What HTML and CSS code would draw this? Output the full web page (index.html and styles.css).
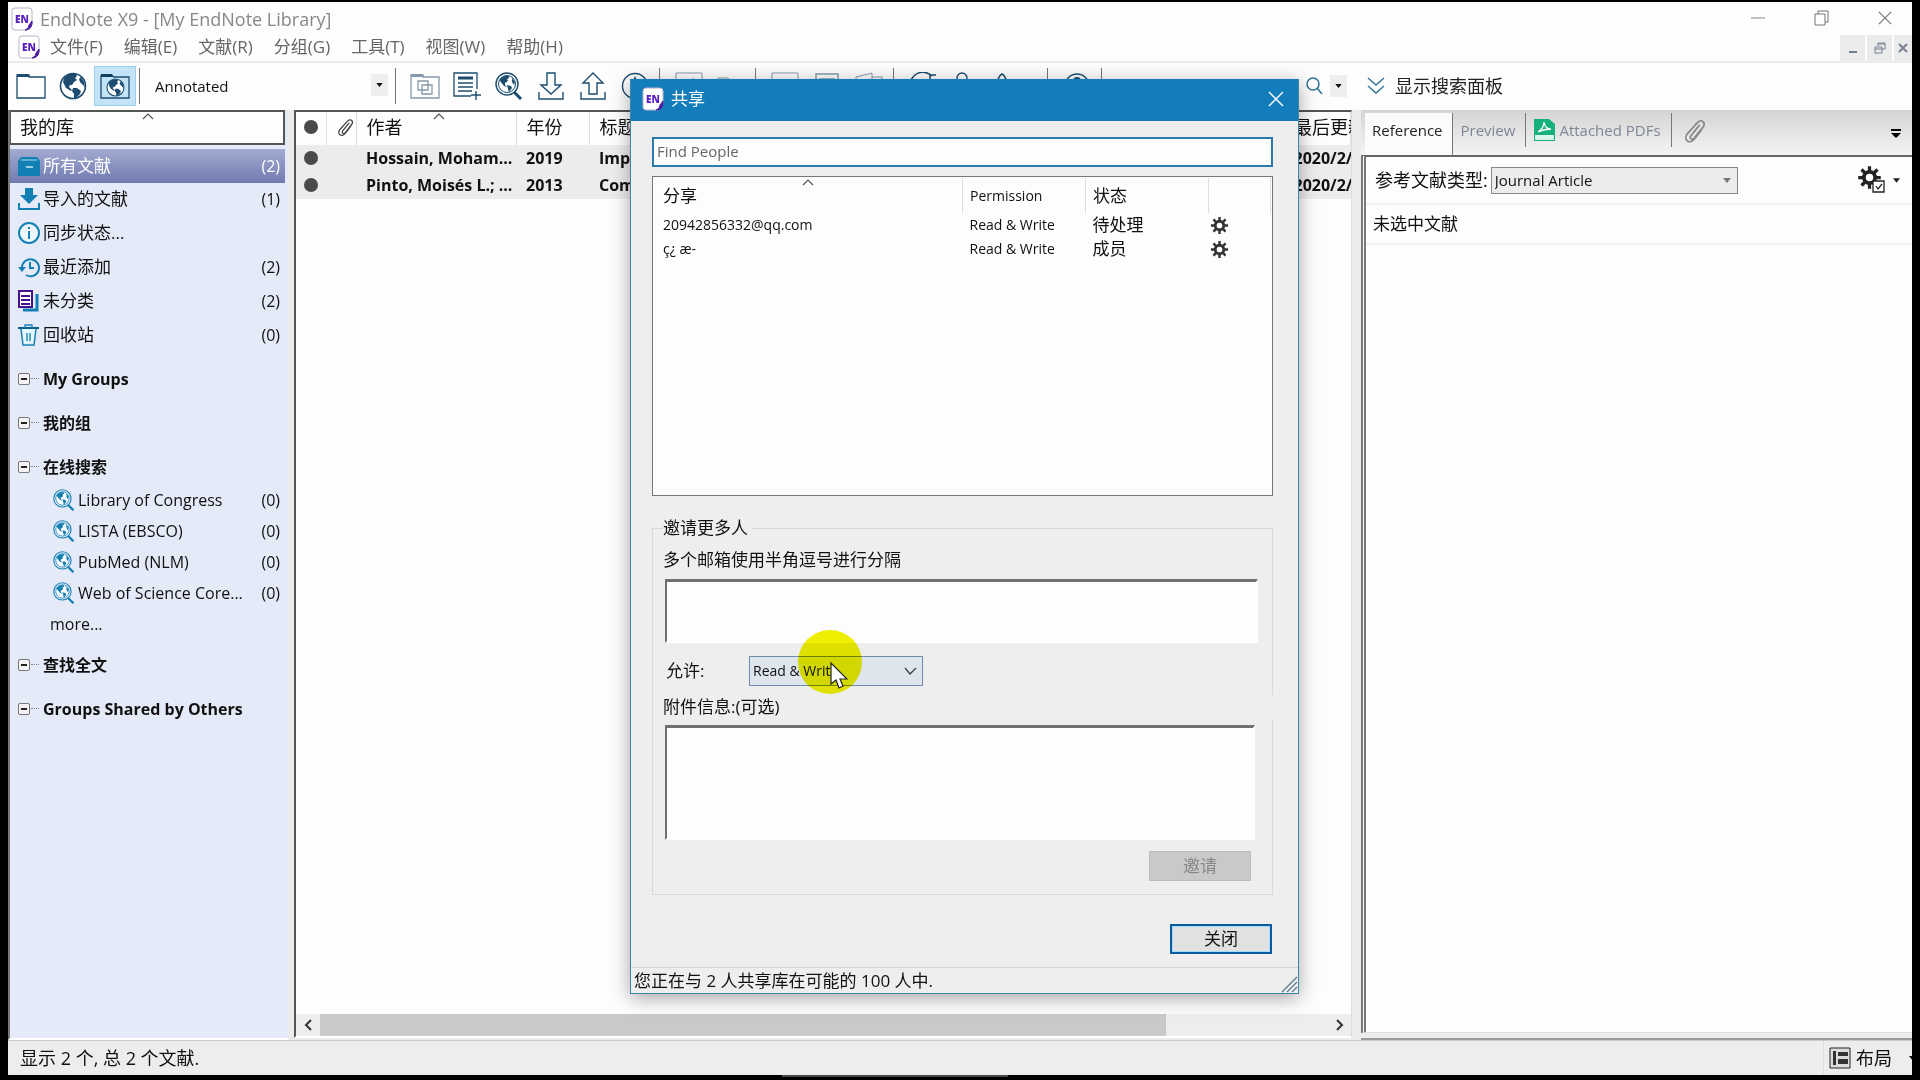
FILE: index.html
```html
<!DOCTYPE html>
<html lang="zh-CN">
<head>
    <meta charset="UTF-8">
    <meta name="viewport" content="width=device-width, initial-scale=1.0">
    <title>EndNote X9 - [My EndNote Library]</title>
    <link rel="stylesheet" href="styles.css">
</head>
<body>
    <!-- Shared icons -->
    <svg class="icon-defs" aria-hidden="true">
        <symbol id="logo" viewBox="0 0 22 24">
            <path d="M4 1h14q3 0 3 3v13l-5 6H4q-3 0-3-3V4q0-3 3-3z" fill="#fff" stroke="#b9b4c8"/>
            <path d="M21 14v3q-1 6-7 6 4-1 4-5z" fill="#4b1fa0" stroke="#4b1fa0"/>
            <text x="11" y="16" text-anchor="middle" font-family="Open Sans, sans-serif" font-size="10" font-weight="800" fill="#5a1fc0">EN</text>
        </symbol>
        <symbol id="globe" viewBox="0 0 28 28">
            <circle cx="14" cy="14" r="12.5" fill="#fff" stroke="currentColor" stroke-width="1.6"/>
            <path d="M5 6l5-4 7 0 1 2-2 2 2 2-3 2-2 3-2 0-1 2 3 3-1 1-5-3-3-6zM14 16l4 0 4 3-1 3-4 4-2 0 0-4-2-3zM22 5l3 5 1 6-2-3-3-3-1-3z" fill="currentColor"/>
        </symbol>
        <symbol id="globe-search" viewBox="0 0 28 28">
            <circle cx="12" cy="12" r="11" fill="none" stroke="currentColor" stroke-width="1.4"/>
            <circle cx="12" cy="12" r="8.5" fill="#fff" stroke="currentColor"/>
            <path d="M5 7l4-3 5 0 0 2-2 1 1 2-3 2 0 2 2 2-3-1-4-5zM12 13l4 1 1 2-3 4-1-3zM17 6l3 4-1 3-2-3z" fill="currentColor"/>
            <path d="M19 20l7 7" stroke="currentColor" stroke-width="3"/>
        </symbol>
        <symbol id="folder" viewBox="0 0 30 26">
            <path d="M1 2v23h28V4H13V2z" fill="#fff" stroke="currentColor" stroke-width="1.3"/>
            <path d="M1 1h11l2 3H1z" fill="currentColor"/>
        </symbol>
        <symbol id="gear" viewBox="0 0 20 20">
            <path d="M10 1v18M1 10h18M3.600 3.600l12.800 12.800M16.400 3.600L3.600 16.400" stroke="currentColor" stroke-width="2.600"/>
            <circle cx="10" cy="10" r="4.500" fill="#fff" stroke="currentColor" stroke-width="3"/>
        </symbol>
        <symbol id="clip" viewBox="0 0 20 24">
            <path d="M15 7l-8 10c-1 2 1 4 3 2l8-10c3-4-2-8-5-4L4 15c-4 5 2 10 6 5l7-9" fill="none" stroke="currentColor" stroke-width="1.5"/>
        </symbol>
        <symbol id="caret" viewBox="0 0 8 5">
            <path d="M0 0h8L4 5z" fill="currentColor"/>
        </symbol>
        <symbol id="sort" viewBox="0 0 12 7">
            <path d="M1 6l5-5 5 5" fill="none" stroke="currentColor" stroke-width="1.2"/>
        </symbol>
        <symbol id="close" viewBox="0 0 16 16">
            <path d="M1 1l14 14M15 1L1 15" fill="none" stroke="currentColor" stroke-width="1.4"/>
        </symbol>
    </svg>

    <div class="window">
        <!-- Title bar -->
        <header class="title-bar">
            <svg class="logo"><use href="#logo"/></svg>
            <span class="title">EndNote X9 - [My EndNote Library]</span>
            <div class="window-buttons">
                <button aria-label="最小化"><svg width="14" height="16"><path d="M0 8h14" stroke="#888"/></svg></button>
                <button aria-label="还原"><svg width="16" height="16"><path d="M1 4h10v11H1zM4 4V1h10v11h-3" fill="none" stroke="#777"/></svg></button>
                <button aria-label="关闭窗口"><svg width="14" height="14"><use href="#close"/></svg></button>
            </div>
        </header>

        <!-- Menu -->
        <nav class="menu-bar">
            <svg class="logo"><use href="#logo"/></svg>
            <a href="#">文件(F)</a>
            <a href="#">编辑(E)</a>
            <a href="#">文献(R)</a>
            <a href="#">分组(G)</a>
            <a href="#">工具(T)</a>
            <a href="#">视图(W)</a>
            <a href="#">帮助(H)</a>
            <div class="child-buttons">
                <button aria-label="最小化文库"><svg width="12" height="14"><path d="M2 11h8" stroke="#778090" stroke-width="2"/></svg></button>
                <button aria-label="还原文库"><svg width="12" height="14"><path d="M1 6h7v6H1zM1 8h7M4 5V2h7v6H8M4 3h7" fill="none" stroke="#778090"/></svg></button>
                <button aria-label="关闭文库"><svg width="12" height="14"><path d="M2 3l8 8M10 3l-8 8" stroke="#778090" stroke-width="2"/></svg></button>
            </div>
        </nav>

        <!-- Toolbar -->
        <div class="toolbar">
            <button class="tool" aria-label="本地文库"><svg width="30" height="26"><use href="#folder"/></svg></button>
            <button class="tool" aria-label="在线搜索"><svg width="28" height="28"><use href="#globe"/></svg></button>
            <button class="tool selected" aria-label="本地文库和在线搜索">
                <svg width="30" height="26" viewBox="0 0 30 26"><path d="M1 2v23h28V4H13" fill="none" stroke="#1c4d70" stroke-width="1.3"/><path d="M1 1h11l2 3H1z" fill="#123f60"/><use href="#globe" x="6" y="5" width="19" height="19"/></svg>
            </button>
            <span class="separator"></span>
            <div class="select-wrap style-select">
                <select aria-label="输出样式"><option>Annotated</option></select>
                <span class="arrow-box"><svg width="7" height="4"><use href="#caret"/></svg></span>
            </div>
            <span class="separator"></span>
            <button class="tool faded" aria-label="复制到本地"><svg width="30" height="26" viewBox="0 0 30 26"><use href="#folder" width="30" height="26"/><path d="M8 8h10v9H8zM12 12h10v9H12z" fill="#fff" stroke="currentColor" stroke-width="1.3"/></svg></button>
            <button class="tool" aria-label="新建文献"><svg width="28" height="28"><path d="M24 17V1H1v23h17" fill="none" stroke="currentColor" stroke-width="1.3"/><path d="M5 6h15" stroke="currentColor" stroke-width="3"/><path d="M5 11h15M5 15h15M5 19h14M23 19v9M18 23h10" stroke="currentColor" stroke-width="1.4"/></svg></button>
            <button class="tool" aria-label="搜索"><svg width="28" height="28"><use href="#globe-search"/></svg></button>
            <button class="tool" aria-label="导入"><svg width="26" height="28"><path d="M9 1h8v12h6L13 22 3 13h6zM1 20v7h24v-7" fill="none" stroke="currentColor" stroke-width="1.4"/></svg></button>
            <button class="tool" aria-label="导出"><svg width="26" height="28"><path d="M9 22h8V11h6L13 1 3 11h6zM1 20v7h24v-7" fill="none" stroke="currentColor" stroke-width="1.4"/></svg></button>
            <button class="tool" aria-label="查找全文"><svg width="28" height="28"><circle cx="14" cy="14" r="12.5" fill="none" stroke="currentColor" stroke-width="1.4"/><path d="M14 4l4 9-4 6-4-6z" fill="currentColor"/></svg></button>
            <span class="separator"></span>
            <button class="tool faded" aria-label="打开链接"><svg width="28" height="28"><path d="M1 1h26v24H1zM8 16L19 6" fill="none" stroke="currentColor"/></svg></button>
            <button class="tool faded" aria-label="打开文件"><svg width="28" height="28"><path d="M1 25V6h10l4 5h12v14z" fill="none" stroke="currentColor"/></svg></button>
            <span class="separator"></span>
            <button class="tool faded" aria-label="插入引文"><svg width="28" height="28"><path d="M1 1h26v24H1z" fill="none" stroke="currentColor"/></svg></button>
            <button class="tool faded" aria-label="格式化文献目录"><svg width="24" height="28"><path d="M1 2h22v24H1zM5 7h14v9H5z" fill="none" stroke="currentColor" stroke-width="1.4"/></svg></button>
            <button class="tool faded" aria-label="返回文档"><svg width="28" height="28"><path d="M1 5l16-4v24H1zM17 5h10v18H17" fill="none" stroke="currentColor"/></svg></button>
            <span class="separator"></span>
            <button class="tool" aria-label="同步"><svg width="30" height="28"><path d="M2 15A13 13 0 0 1 24 4M28 3h-6v8" fill="none" stroke="currentColor" stroke-width="1.5"/></svg></button>
            <button class="tool" aria-label="共享文库"><svg width="28" height="28"><circle cx="11" cy="6" r="5" fill="none" stroke="currentColor" stroke-width="1.4"/></svg></button>
            <button class="tool" aria-label="活动"><svg width="28" height="28"><path d="M3 20q1-16 6-18 5 2 6 18z" fill="none" stroke="currentColor" stroke-width="1.4"/></svg></button>
            <button class="tool-arrow" aria-label="更多"></button>
            <span class="separator"></span>
            <button class="tool" aria-label="帮助"><svg width="26" height="28"><circle cx="13" cy="14" r="12" fill="none" stroke="currentColor" stroke-width="1.4"/><path d="M9 10q1-4 4-4t4 4l-4 4v4" fill="none" stroke="currentColor" stroke-width="2"/></svg></button>
            <span class="separator"></span>
            <button class="quick-search" aria-label="快速搜索"><svg width="17" height="18"><circle cx="7" cy="7" r="6" fill="none" stroke="#2f7396" stroke-width="1.5"/><path d="M11 11l5 6" stroke="#2f7396" stroke-width="1.5"/></svg></button>
            <span class="arrow-box"><svg width="7" height="4"><use href="#caret"/></svg></span>
            <button class="show-search">
                <svg width="18" height="18"><path d="M1 1l8 7 8-7M1 9l8 7 8-7" fill="none" stroke="#2f7396" stroke-width="1.4"/></svg>
                <span>显示搜索面板</span>
            </button>
        </div>

        <div class="main">
            <!-- Groups -->
            <aside class="sidebar">
                <div class="sidebar-header">我的库<svg class="sort-mark"><use href="#sort"/></svg></div>
                <ul class="library-list">
                    <li class="selected">
                        <svg class="row-icon"><path d="M3 2h16l3 4v15H0V6z" fill="#1380b4"/><path d="M3 5h16" stroke="#79c0de" stroke-width="1.5"/><path d="M8 12h7" stroke="#9ad0e6" stroke-width="2"/></svg>
                        <span>所有文献</span><span class="count">(2)</span>
                    </li>
                    <li>
                        <svg class="row-icon"><path d="M7 0h8v7h5l-9 9-9-9h5z" fill="#1380b4"/><path d="M1 15v6h20v-6" fill="none" stroke="#1380b4" stroke-width="2"/></svg>
                        <span>导入的文献</span><span class="count">(1)</span>
                    </li>
                    <li>
                        <svg class="row-icon"><circle cx="11" cy="11" r="10" fill="#eef8fc" stroke="#1380b4" stroke-width="2"/><path d="M11 9v8M11 5v2" stroke="#1380b4" stroke-width="2"/></svg>
                        <span>同步状态...</span>
                    </li>
                    <li>
                        <svg class="row-icon"><path d="M4 12A8.500 8.500 0 1 1 8 19" fill="none" stroke="#1380b4" stroke-width="2"/><path d="M0 11h8l-4 5z" fill="#1380b4"/><path d="M12 6v6h4" fill="none" stroke="#1380b4" stroke-width="2"/></svg>
                        <span>最近添加</span><span class="count">(2)</span>
                    </li>
                    <li>
                        <svg class="row-icon"><path d="M1 1h13v16H1zM3 6h9M3 10h9M3 14h9" fill="#fff" stroke="#45128f" stroke-width="2"/><path d="M5 20h14V4" fill="none" stroke="#1380b4" stroke-width="3"/></svg>
                        <span>未分类</span><span class="count">(2)</span>
                    </li>
                    <li>
                        <svg class="row-icon"><path d="M3 5l2 16h11l2-16" fill="#e4f6fd" stroke="#1380b4" stroke-width="1.5"/><path d="M0 4h21" stroke="#0c5f8a" stroke-width="2"/><path d="M7 4V1h7v3M9 9v8M12 9v8" fill="none" stroke="#1380b4" stroke-width="1.3"/></svg>
                        <span>回收站</span><span class="count">(0)</span>
                    </li>
                </ul>
                <div class="groups">
                    <div class="group"><span class="toggle"></span>My Groups</div>
                    <div class="group"><span class="toggle"></span>我的组</div>
                    <div class="group"><span class="toggle"></span>在线搜索</div>
                </div>
                <ul class="online-list">
                    <li><svg class="row-icon"><use href="#globe-search"/></svg><span>Library of Congress</span><span class="count">(0)</span></li>
                    <li><svg class="row-icon"><use href="#globe-search"/></svg><span>LISTA (EBSCO)</span><span class="count">(0)</span></li>
                    <li><svg class="row-icon"><use href="#globe-search"/></svg><span>PubMed (NLM)</span><span class="count">(0)</span></li>
                    <li><svg class="row-icon"><use href="#globe-search"/></svg><span>Web of Science Core...</span><span class="count">(0)</span></li>
                    <li><a href="#">more...</a></li>
                </ul>
                <div class="groups">
                    <div class="group"><span class="toggle"></span>查找全文</div>
                    <div class="group"><span class="toggle"></span>Groups Shared by Others</div>
                </div>
            </aside>

            <!-- Reference list -->
            <section class="reference-list">
                <table class="references">
                    <colgroup>
                        <col class="col-dot"><col class="col-clip"><col class="col-author"><col class="col-year"><col><col class="col-updated">
                    </colgroup>
                    <thead>
                        <tr>
                            <th class="dot-cell"><span class="dot"></span></th>
                            <th class="clip-cell"><svg width="20" height="20"><use href="#clip"/></svg></th>
                            <th>作者<svg class="sort-mark"><use href="#sort"/></svg></th>
                            <th>年份</th>
                            <th>标题</th>
                            <th>最后更新</th>
                        </tr>
                    </thead>
                    <tbody>
                        <tr><td class="dot-cell"><span class="dot"></span></td><td></td><td>Hossain, Moham...</td><td>2019</td><td>Imp</td><td>2020/2/</td></tr>
                        <tr><td class="dot-cell"><span class="dot"></span></td><td></td><td>Pinto, Moisés L.; ...</td><td>2013</td><td>Com</td><td>2020/2/</td></tr>
                    </tbody>
                </table>
                <div class="scrollbar">
                    <button aria-label="向左滚动"><svg width="9" height="12"><path d="M7 1L2 6l5 5" fill="none" stroke="#333" stroke-width="2"/></svg></button>
                    <div class="track"><div class="thumb"></div></div>
                    <button aria-label="向右滚动"><svg width="9" height="12"><path d="M2 1l5 5-5 5" fill="none" stroke="#333" stroke-width="2"/></svg></button>
                </div>
            </section>

            <!-- Reference panel -->
            <section class="reference-panel">
                <div class="tabs">
                    <button class="tab active">Reference</button>
                    <button class="tab">Preview</button>
                    <button class="tab">
                        <svg width="21" height="22"><path d="M0 0h15l6 5v17H0z" fill="#16b07a"/><path d="M4 13q6-4 6-10 1 7 7 7-7 0-13 3z" fill="none" stroke="#fff" stroke-width="1.3"/><path d="M1 16h19v5H1z" fill="#d9f5ea"/></svg>
                        Attached PDFs
                    </button>
                    <button class="tab" aria-label="附件"><svg class="clip" width="24" height="27"><use href="#clip"/></svg></button>
                    <button class="tabs-menu" aria-label="标签菜单"><svg width="10" height="9"><path d="M0 1h10" stroke="#000" stroke-width="2"/><path d="M0 4h10L5 9z"/></svg></button>
                </div>
                <div class="panel-body">
                    <div class="type-row">
                        <label for="ref-type">参考文献类型:</label>
                        <div class="select-wrap type-select">
                            <select id="ref-type"><option>Journal Article</option></select>
                            <svg class="caret" width="8" height="5"><use href="#caret"/></svg>
                        </div>
                        <button class="panel-options" aria-label="选项">
                            <svg width="30" height="30" viewBox="0 0 30 30"><use href="#gear" width="25" height="25"/><path d="M16 16h11v11H16z" fill="#fff" stroke="#222" stroke-width="1.3"/><path d="M19 21l2 3 4-5" fill="none" stroke="#222" stroke-width="1.3"/></svg>
                            <svg width="7" height="5"><use href="#caret"/></svg>
                        </button>
                    </div>
                    <div class="empty-note">未选中文献</div>
                </div>
            </section>
        </div>

        <!-- Status bar -->
        <footer class="status-bar">
            <span>显示 2 个, 总 2 个文献.</span>
            <button class="layout-button">
                <svg width="22" height="22"><path d="M1 1h20v20H1z" fill="#ddd" stroke="#222"/><path d="M4 4h3v14H4zM9 5h10v4H9zM9 12h10v5H9z" fill="#333"/></svg>
                布局
                <svg class="caret" width="8" height="5"><use href="#caret"/></svg>
            </button>
        </footer>
    </div>
    <div class="screen-edge"></div>

    <!-- Sharing dialog -->
    <div class="dialog" role="dialog" aria-labelledby="dialog-title">
        <div class="dialog-title">
            <svg class="logo"><use href="#logo"/></svg>
            <span id="dialog-title">共享</span>
            <button aria-label="关闭对话框"><svg width="16" height="16"><use href="#close"/></svg></button>
        </div>
        <div class="dialog-body">
            <input class="find-people" type="text" placeholder="Find People" aria-label="Find People">
            <div class="people">
                <table>
                    <colgroup>
                        <col><col class="col-permission"><col class="col-permission"><col class="col-gear">
                    </colgroup>
                    <thead>
                        <tr><th>分享<svg class="sort-mark"><use href="#sort"/></svg></th><th>Permission</th><th>状态</th><th></th></tr>
                    </thead>
                    <tbody>
                        <tr><td>20942856332@qq.com</td><td>Read &amp; Write</td><td>待处理</td><td><svg class="gear"><use href="#gear"/></svg></td></tr>
                        <tr><td>ç¿ æ-</td><td>Read &amp; Write</td><td>成员</td><td><svg class="gear"><use href="#gear"/></svg></td></tr>
                    </tbody>
                </table>
            </div>
            <fieldset class="invite">
                <legend>邀请更多人</legend>
                <label class="line" for="emails">多个邮箱使用半角逗号进行分隔</label>
                <textarea id="emails" class="emails"></textarea>
                <div class="allow-row">
                    <label for="allow">允许:</label>
                    <div class="select-wrap allow-select">
                        <select id="allow"><option>Read &amp; Write</option></select>
                        <svg class="caret" width="13" height="8"><path d="M1 1l5 6 6-6" fill="none" stroke="#444" stroke-width="1.4"/></svg>
                        <span class="click-mark"></span>
                    </div>
                </div>
                <label class="line message-label" for="message">附件信息:(可选)</label>
                <textarea id="message" class="message"></textarea>
                <button class="invite-button" disabled>邀请</button>
            </fieldset>
            <button class="close-button">关闭</button>
        </div>
        <div class="dialog-status">
            您正在与 2 人共享库在可能的 100 人中.
            <svg class="grip" width="17" height="17"><path d="M1 16L16 1M6 16L16 6M11 16l5-5" stroke="#5d7f90" stroke-width="1.4"/></svg>
        </div>
        <svg class="cursor" width="18" height="27" viewBox="0 0 18 27"><path d="M1 1v21l5-4 3 8 4-2-3-7h7z" fill="#fff" stroke="#222" stroke-width="1.2"/></svg>
    </div>
</body>
</html>
```

FILE: styles.css
```css
* {
    box-sizing: border-box;
}
body {
    margin: 0;
    height: 100vh;
    padding: 2px 8px 0;
    display: flex;
    flex-direction: column;
    background: #000;
    color: #111;
    font-family: "Open Sans", "Noto Sans CJK SC", sans-serif;
    font-size: 16px;
    line-height: 24px;
    overflow: hidden;
}
button, input, select, textarea {
    font: inherit;
    color: inherit;
    margin: 0;
    padding: 0;
    border: none;
    border-radius: 0;
    background: none;
}
a {
    color: inherit;
    text-decoration: none;
}
ul {
    list-style: none;
    margin: 0;
    padding: 0;
}
svg {
    display: block;
    flex: none;
}
.icon-defs {
    position: absolute;
    width: 0;
    height: 0;
}
.logo {
    width: 22px;
    height: 24px;
}
.window {
    flex: 1;
    min-height: 0;
    display: flex;
    flex-direction: column;
    background: #fdfdfd;
}
.screen-edge {
    height: 5px;
    width: 226px;
    margin-left: 774px;
    border-top: 2px solid #484848;
}

/* Title bar and menu */
.title-bar {
    display: flex;
    align-items: center;
    height: 31px;
    padding: 2px 0 0 3px;
    color: #888;
    font-size: 18px;
}
.title {
    margin-left: 7px;
}
.window-buttons {
    display: flex;
    align-items: center;
    margin-left: auto;
    padding-bottom: 2px;
}
.window-buttons button {
    width: 64px;
    display: flex;
    justify-content: center;
    color: #777;
}
.window-buttons button:last-child {
    width: 54px;
    margin-left: 4px;
}
.menu-bar {
    display: flex;
    align-items: center;
    height: 30px;
    padding-left: 10px;
    gap: 21px;
    border-bottom: 2px solid #ececec;
    color: #666;
    font-size: 17px;
}
.menu-bar .logo {
    margin-right: -11px;
}
.child-buttons {
    display: flex;
    gap: 2px;
    margin-left: auto;
    padding-top: 2px;
    align-self: stretch;
}
.child-buttons button {
    width: 25px;
    display: flex;
    align-items: center;
    justify-content: center;
    background: #ebebeb;
}
.child-buttons button:last-child {
    width: 18px;
}

/* Toolbar */
.toolbar {
    display: flex;
    align-items: center;
    height: 47px;
    padding: 0 0 2px 2px;
    color: #1c4d70;
}
.tool {
    width: 42px;
    height: 40px;
    flex: none;
    display: flex;
    align-items: center;
    justify-content: center;
}
.tool.selected {
    background: #c3e3f8;
    border: 1px solid #9dcdec;
}
.tool.faded {
    color: #8699aa;
}
.tool-arrow {
    width: 16px;
}
.separator {
    width: 1px;
    height: 36px;
    flex: none;
    margin: 0 8px 0 3px;
    background: #777;
}
.select-wrap {
    display: grid;
    position: relative;
}
.select-wrap > * {
    grid-area: 1 / 1;
}
.select-wrap select {
    appearance: none;
    width: 100%;
}
.select-wrap .caret {
    align-self: center;
    justify-self: end;
    pointer-events: none;
}
.style-select {
    width: 244px;
    padding-right: 4px;
    color: #111;
    font-size: 15px;
}
.style-select select {
    padding-left: 7px;
}
.style-select .arrow-box {
    justify-self: end;
}
.arrow-box {
    display: flex;
    align-items: center;
    justify-content: center;
    width: 17px;
    height: 22px;
    background: #eee;
    color: #111;
    pointer-events: none;
}
.quick-search {
    margin-left: auto;
    margin-right: 7px;
}
.show-search {
    width: 565px;
    padding-left: 20px;
    display: flex;
    align-items: center;
    gap: 10px;
    color: #222;
    font-size: 18px;
}

/* Main area */
.main {
    flex: 1;
    min-height: 0;
    display: flex;
    background: #ececec;
}
.sort-mark {
    position: absolute;
    top: 1px;
    left: 48%;
    width: 12px;
    height: 7px;
    color: #555;
}
.sidebar {
    width: 280px;
    border-left: 2px solid #777;
    background: #e5eaf8;
    border-bottom: 2px solid #fff;
}
.sidebar-header {
    position: relative;
    height: 35px;
    margin-right: 3px;
    padding: 3px 9px;
    border: 2px solid #555;
    border-left: 1px solid #555;
    background: #fdfdfd;
    font-size: 18px;
}
.library-list {
    padding-top: 4px;
    padding-right: 3px;
    font-size: 17px;
}
.library-list li {
    display: flex;
    align-items: center;
    height: 34px;
    padding: 0 5px 2px 8px;
    gap: 3px;
}
.library-list .selected {
    background: linear-gradient(#a3abd1, #6f7ab0);
    color: #fff;
    padding-bottom: 0;
}
.row-icon {
    width: 22px;
    height: 22px;
    color: #1380b4;
}
.count {
    margin-left: auto;
    font-size: 16px;
}
.groups {
    display: grid;
    gap: 4px;
    padding-top: 6px;
}
.group {
    display: flex;
    align-items: center;
    height: 40px;
    padding-left: 8px;
    font-weight: bold;
}
.toggle {
    width: 12px;
    height: 12px;
    margin-right: 13px;
    border: 1px solid #777;
    border-radius: 2px;
    background: linear-gradient(#222, #222) center / 6px 2px no-repeat #f4f4f4;
    position: relative;
}
.toggle::after {
    content: "";
    position: absolute;
    left: 12px;
    top: 4px;
    width: 8px;
    border-top: 1px dotted #888;
}
.online-list {
    margin-top: -3px;
}
.online-list li {
    display: flex;
    align-items: center;
    height: 31px;
    gap: 3px;
    padding: 0 8px 0 43px;
}
.online-list a {
    margin-left: -3px;
}

.reference-list {
    flex: 1;
    min-width: 0;
    margin-left: 6px;
    display: flex;
    flex-direction: column;
    border-top: 2px solid #555;
    border-left: 2px solid #555;
    border-right: 1px solid #ddd;
    border-bottom: 2px solid #fff;
    margin-bottom: 2px;
    background: #fdfdfd;
    overflow: hidden;
}
.references {
    width: 100%;
    table-layout: fixed;
    border-collapse: collapse;
}
.references th {
    position: relative;
    height: 33px;
    padding: 0 0 3px 10px;
    border-right: 1px solid #ddd;
    font-size: 18px;
    font-weight: normal;
    text-align: left;
    white-space: nowrap;
}
.references td {
    height: 27px;
    padding: 0 0 1px 10px;
    background: #ececec;
    font-weight: bold;
    white-space: nowrap;
}
.references .dot-cell, .references .clip-cell {
    padding-left: 8px;
}
.references th:last-child {
    padding-left: 5px;
}
.references td:last-child {
    padding-left: 5px;
}
.dot {
    display: block;
    width: 14px;
    height: 14px;
    border-radius: 50%;
    background: #4a4a4a;
}
.clip-cell svg {
    color: #444;
}
.col-dot, .col-clip {
    width: 30px;
}
.col-author {
    width: 160px;
}
.col-year {
    width: 73px;
}
.col-updated {
    width: 62px;
}
.scrollbar {
    display: flex;
    height: 22px;
    margin-top: auto;
    background: #ededed;
}
.scrollbar button {
    width: 24px;
    display: flex;
    align-items: center;
    justify-content: center;
}
.track {
    flex: 1;
}
.thumb {
    width: 84%;
    height: 100%;
    background: #c9c9c9;
}

/* Right panel */
.reference-panel {
    width: 551px;
    margin-left: 9px;
    display: flex;
    flex-direction: column;
    border-bottom: 2px solid #999;
}
.tabs {
    display: flex;
    height: 45px;
    padding: 3px 0 0 4px;
    background: linear-gradient(#d4d4d4, #f4f4f4);
    font-size: 15px;
    color: #7f8696;
}
.tab {
    display: flex;
    align-items: center;
    gap: 4px;
    padding: 0 10px 0 8px;
    border-right: 1px solid #777;
    margin-bottom: 8px;
}
.tab:nth-child(4) {
    padding-left: 10px;
    border: none;
}
.tab.active {
    margin-bottom: 0;
    padding: 0 9px 8px 7px;
    background: #fbfbfb;
    color: #222;
}
.clip {
    color: #888;
}
.tabs-menu {
    margin-left: auto;
    margin-right: 11px;
    margin-bottom: 2px;
}
.panel-body {
    flex: 1;
    margin-bottom: 5px;
    border: 2px solid #666;
    border-left: 5px double #777;
    border-right: none;
    border-bottom: 1px solid #ddd;
    background: #fdfdfd;
    font-size: 17px;
}
.type-row {
    display: flex;
    align-items: center;
    height: 48px;
    padding-left: 9px;
    border-bottom: 2px solid #f0f0f0;
    font-size: 18px;
}
.type-select {
    width: 247px;
    height: 27px;
    margin-left: 3px;
    border: 1px solid #888;
    background: #ececec;
    font-size: 15px;
}
.type-select select {
    padding-left: 3px;
}
.type-select .caret {
    margin-right: 6px;
    color: #777;
}
.panel-options {
    display: flex;
    align-items: center;
    gap: 6px;
    margin-left: auto;
    margin-right: 12px;
    color: #222;
}
.empty-note {
    padding: 7px;
    border-bottom: 2px solid #f0f0f0;
}

.status-bar {
    display: flex;
    align-items: center;
    justify-content: space-between;
    height: 35px;
    padding-left: 12px;
    border-top: 1px solid #ccc;
    background: #ededed;
    font-size: 18px;
    overflow: hidden;
}
.layout-button {
    display: flex;
    align-items: center;
    height: 100%;
    gap: 5px;
    padding-left: 5px;
    margin-right: -5px;
    border-left: 1px solid #ddd;
}
.layout-button .caret {
    margin-left: 12px;
}

/* Sharing dialog */
.dialog {
    position: absolute;
    left: 630px;
    top: 79px;
    width: 669px;
    border: 1px solid #3a87a8;
    border-top: none;
    background: #eee;
    box-shadow: 0 4px 18px rgba(0, 0, 0, 0.35);
    font-size: 17px;
}
.dialog-title {
    display: flex;
    align-items: center;
    gap: 7px;
    height: 42px;
    padding: 0 14px 2px 11px;
    background: #137dbb;
    color: #fff;
}
.dialog-title button {
    margin-left: auto;
}
.dialog-body {
    padding: 16px 25px 13px 21px;
    display: flex;
    flex-direction: column;
}
.find-people {
    height: 30px;
    padding: 0 3px 2px;
    border: 2px solid #2b7bb0;
    background: #fdfdfd;
    font-size: 15px;
}
.find-people::placeholder {
    color: #666;
    opacity: 1;
}
.people {
    height: 320px;
    margin-top: 9px;
    padding: 1px;
    border: 1px solid #777;
    background: #fdfdfd;
}
.people table {
    width: 100%;
    table-layout: fixed;
    border-collapse: collapse;
    font-size: 14px;
}
.people th {
    position: relative;
    height: 35px;
    padding: 0 0 0 7px;
    border-right: 1px solid #ddd;
    font-weight: normal;
    text-align: left;
}
.people td {
    height: 24px;
    padding: 0 0 0 7px;
    line-height: 22px;
}
.people th:first-child, .people td:first-child {
    padding-left: 9px;
}
.people th:first-child, .people th:nth-child(3), .people td:nth-child(3) {
    font-size: 17px;
}
.col-permission {
    width: 123px;
}
.col-gear {
    width: 62px;
}
.people td:last-child {
    padding-left: 1px;
}
.gear {
    width: 19px;
    height: 19px;
    color: #333;
}
.invite {
    display: flex;
    flex-direction: column;
    min-width: 0;
    margin: 20px 0 0;
    padding: 8px 14px 13px 12px;
    border: 1px solid #d8d8d8;
}
.invite legend {
    margin-left: -2px;
    padding: 0 4px 0 0;
}
.line {
    margin-left: -2px;
}
.message-label {
    margin: 9px -15px 6px -2px;
    background: #eee;
}
.invite textarea {
    display: block;
    resize: none;
    background: #fdfdfd;
    border-top: 3px solid #707070;
    border-left: 2px solid #707070;
    border-right: 2px solid #fff;
    border-bottom: 2px solid #fff;
}
.emails {
    height: 64px;
    margin-top: 7px;
}
.message {
    height: 115px;
    margin-right: 3px;
}
.allow-row {
    display: flex;
    align-items: center;
    margin-top: 13px;
}
.allow-row label {
    width: 84px;
    padding-left: 1px;
}
.allow-select {
    width: 174px;
    height: 30px;
    border: 1px solid #6d8bb0;
    background: #dfe5ed;
    font-size: 14px;
}
.allow-select select {
    padding-left: 3px;
}
.allow-select .caret {
    margin-right: 5px;
}
.click-mark {
    position: absolute;
    left: 48px;
    top: -27px;
    width: 64px;
    height: 64px;
    border-radius: 50%;
    background: #f0f000;
    mix-blend-mode: multiply;
}
.cursor {
    position: absolute;
    left: 199px;
    top: 583px;
}
.invite-button, .close-button {
    width: 102px;
    height: 30px;
    align-self: flex-end;
}
.invite-button {
    margin: 11px 7px 0 0;
    border: 1px solid #bbb;
    background: #c9c9c9;
    color: #888;
}
.close-button {
    margin-top: 29px;
    margin-right: 1px;
    border: 2px solid #0a5aa0;
    background: #e1e1e1;
    box-shadow: inset 0 0 0 1px #a5dcf8;
}
.dialog-status {
    position: relative;
    padding: 1px 3px 0;
    border-top: 1px solid #d4d4d4;
}
.grip {
    position: absolute;
    right: 0;
    bottom: 0;
}
```
